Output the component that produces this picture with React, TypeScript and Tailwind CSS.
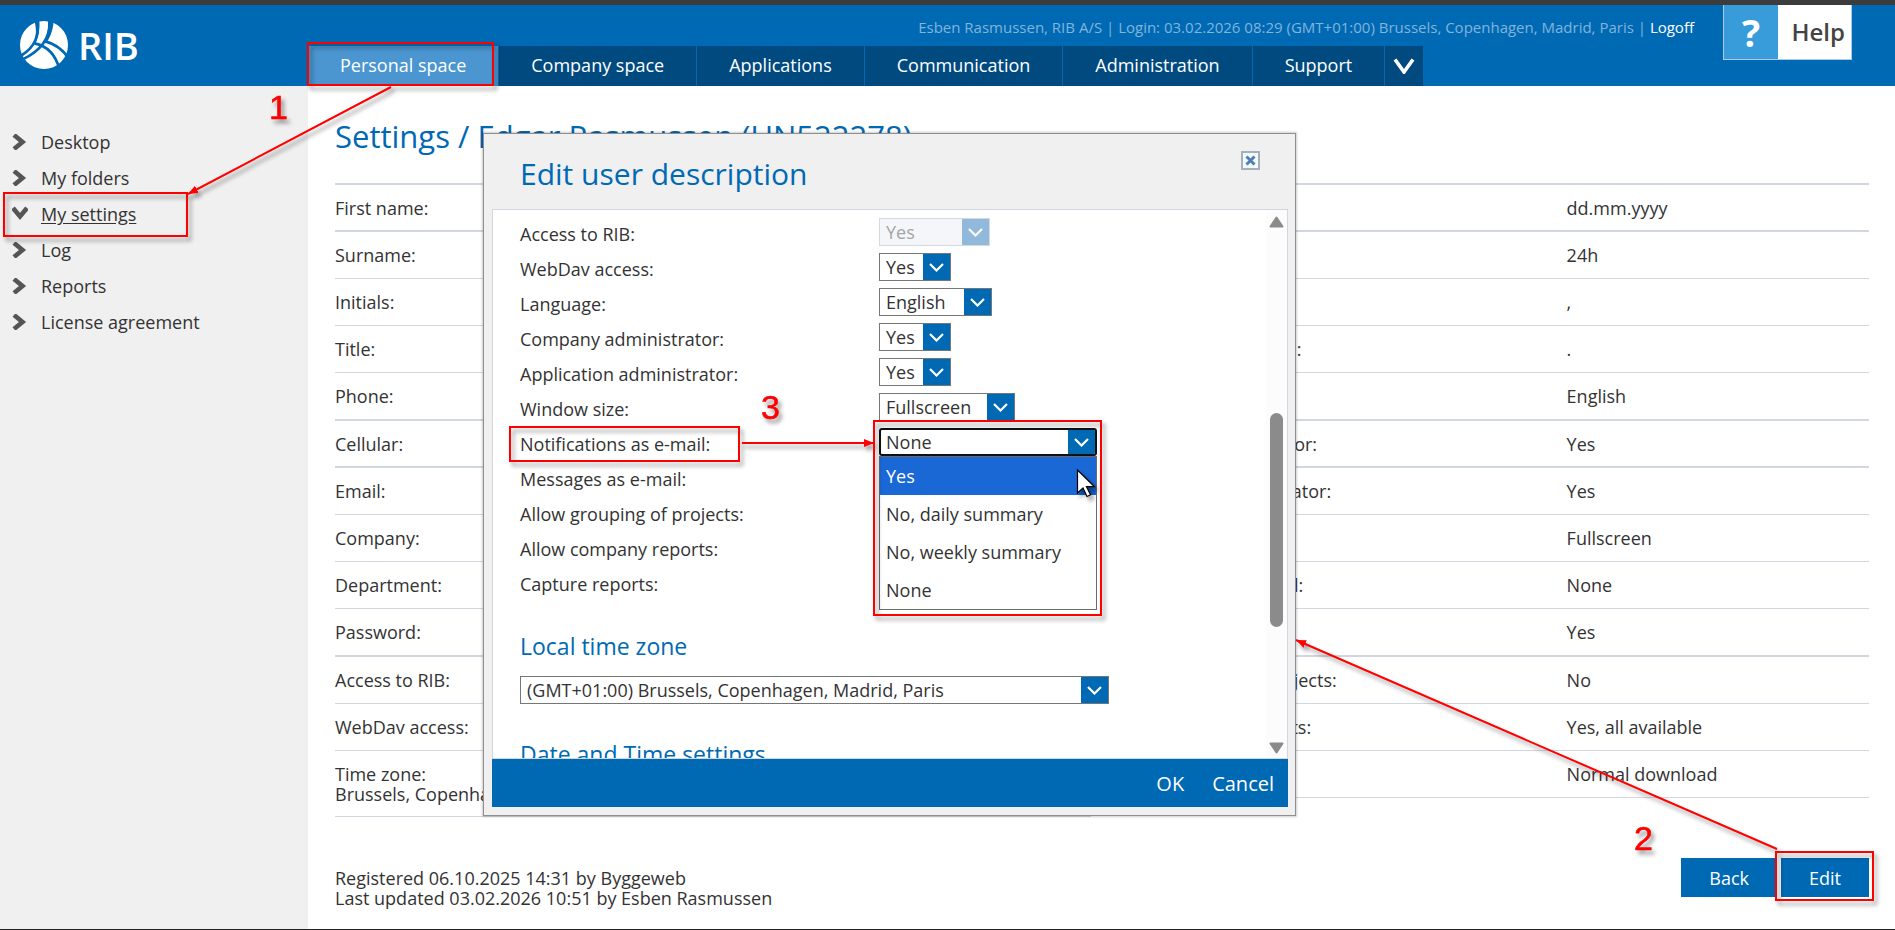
import React, { useState } from "react";

const tabs = ["Personal space", "Company space", "Applications", "Communication", "Administration", "Support"];

const menuItems = ["Desktop", "My folders", "My settings", "Log", "Reports", "License agreement"];

const personRows = [
  { label: "First name:", value: "", thick: true },
  { label: "Surname:", value: "" },
  { label: "Initials:", value: "" },
  { label: "Title:", value: "" },
  { label: "Phone:", value: "", thick: true, tall: true },
  { label: "Cellular:", value: "", thick: true },
  { label: "Email:", value: "" },
  { label: "Company:", value: "" },
  { label: "Department:", value: "" },
  { label: "Password:", value: "", thick: true, tall: true },
  { label: "Access to RIB:", value: "" },
  { label: "WebDav access:", value: "" },
];

const accessRows = [
  { label: "Date format:", value: "dd.mm.yyyy", thick: true },
  { label: "Time format:", value: "24h" },
  { label: "Decimal symbol:", value: "," },
  { label: "Digit grouping symbol:", value: "." },
  { label: "Language:", value: "English", thick: true, tall: true },
  { label: "Company administrator:", value: "Yes", thick: true },
  { label: "Application administrator:", value: "Yes" },
  { label: "Window size:", value: "Fullscreen" },
  { label: "Notifications as e-mail:", value: "None" },
  { label: "Messages as e-mail:", value: "Yes", thick: true, tall: true },
  { label: "Allow grouping of projects:", value: "No" },
  { label: "Allow company reports:", value: "Yes, all available" },
  { label: "Capture reports:", value: "Normal download" },
];

const notifyOptions = ["Yes", "No, daily summary", "No, weekly summary", "None"];

const formRows = [
  { id: "access", label: "Access to RIB:", options: ["Yes", "No"], width: "w-[111px]", disabled: true },
  { id: "webdav", label: "WebDav access:", options: ["Yes", "No"], width: "w-[72px]" },
  { id: "language", label: "Language:", options: ["English", "Dansk"], width: "w-[113px]" },
  { id: "company-admin", label: "Company administrator:", options: ["Yes", "No"], width: "w-[72px]" },
  { id: "app-admin", label: "Application administrator:", options: ["Yes", "No"], width: "w-[72px]" },
  { id: "window", label: "Window size:", options: ["Fullscreen"], width: "w-[136px]" },
  { id: "notify", label: "Notifications as e-mail:", options: ["None"], width: "w-[218px]", open: true },
  { id: "messages", label: "Messages as e-mail:", options: ["Yes", "No"], width: "w-[72px]" },
  { id: "grouping", label: "Allow grouping of projects:", options: ["No", "Yes"], width: "w-[72px]" },
  { id: "company-reports", label: "Allow company reports:", options: ["Yes", "No"], width: "w-[72px]" },
  { id: "capture", label: "Capture reports:", options: ["Yes", "No"], width: "w-[72px]" },
];

type Row = { label: string; value: string; thick?: boolean; tall?: boolean };

export default function App() {
  const [activeTab, setActiveTab] = useState("Personal space");
  const [dialogOpen, setDialogOpen] = useState(true);

  return (
    <div className="relative flex min-h-screen flex-col overflow-hidden border-b border-[#222222] bg-white font-['Open_Sans','Noto_Sans',sans-serif] text-lg leading-5 text-[#333333]">
      <div className="h-[5px] bg-[#3c3c3c]" />
      <header className="flex h-[81px] bg-[#0069b4]">
        <div className="flex w-[308px] items-center gap-[10px] pb-[2px] pl-5">
          <Logo />
          <span className="text-[38px] leading-10 font-semibold text-white">RIB</span>
        </div>
        <div className="mr-[29px] flex flex-1 flex-col justify-between">
          <p className="pt-3 text-right text-[15px] leading-5 text-[#80b4da]">
            Esben Rasmussen, RIB A/S | Login: 03.02.2026 08:29 (GMT+01:00) Brussels, Copenhagen, Madrid, Paris |{" "}
            <a href="#logoff" className="text-white">Logoff</a>
          </p>
          <nav className="flex h-10">
            {tabs.map((tab) => (
              <button
                key={tab}
                onClick={() => setActiveTab(tab)}
                className={
                  "border-r border-[#0069b4] px-8 pb-[2px] text-white " +
                  (tab === activeTab ? "bg-[#4b96d1]" : "bg-[#004a80]")
                }
              >
                {tab}
              </button>
            ))}
            <button className="flex w-[38px] items-center justify-center bg-[#004a80]" aria-label="More">
              <svg width="22" height="16" viewBox="0 0 22 16">
                <path d="M2 1.5 11 14 20 1.5" fill="none" stroke="#fff" strokeWidth="3.6" />
              </svg>
            </button>
          </nav>
        </div>
        <a
          href="#help"
          className="mr-[43px] flex h-[55px] w-[129px] border border-t-0 border-[#a9cdea] bg-white text-2xl font-semibold text-[#444444]"
        >
          <span className="flex w-[54px] items-center justify-center bg-[#389bda] text-[38px] font-bold text-white">?</span>
          <span className="flex flex-1 items-center justify-end pr-[6px]">Help</span>
        </a>
      </header>

      <div className="flex flex-1">
        <aside className="w-[308px] bg-[#f0f0f0] pt-[38px]">
          <ul>
            {menuItems.map((item) => (
              <li key={item}>
                <a href="#menu" className="flex h-9 items-center">
                  <span className="flex w-[41px] pl-3">
                    <MenuArrow down={item === "My settings"} />
                  </span>
                  <span className={item === "My settings" ? "underline underline-offset-2" : ""}>{item}</span>
                </a>
              </li>
            ))}
          </ul>
        </aside>

        <main className="flex flex-1 flex-col pt-7 pr-[26px] pl-[27px]">
          <h1 className="text-[31px] leading-[44px] text-[#0069b4]">Settings / Edgar Rasmussen (UN522278)</h1>
          <div className="mt-[25px] grid grid-cols-2 items-start gap-x-[22px]">
            <DetailTable rows={personRows}>
              <tr className="h-[66px]">
                <td colSpan={2} className="border-b border-[#d2d7df]">
                  Time zone:
                  <br />
                  Brussels, Copenhagen, Madrid, Paris
                </td>
              </tr>
            </DetailTable>
            <DetailTable rows={accessRows} />
          </div>
          <div className="mt-[41px] flex items-start justify-between pb-5">
            <p className="pt-[10px]">
              Registered 06.10.2025 14:31 by Byggeweb
              <br />
              Last updated 03.02.2026 10:51 by Esben Rasmussen
            </p>
            <div className="flex gap-1">
              <button className="h-[39px] bg-[#0069b4] px-7 text-white">Back</button>
              <button className="h-[39px] bg-[#0069b4] px-7 text-white" onClick={() => setDialogOpen(true)}>
                Edit
              </button>
            </div>
          </div>
        </main>
      </div>

      {dialogOpen && <EditDialog onClose={() => setDialogOpen(false)} />}
      <Annotations />
    </div>
  );
}

function DetailTable({ rows, children }: { rows: Row[]; children?: React.ReactNode }) {
  return (
    <table className="w-full table-fixed border-separate border-spacing-0 border-t-2 border-[#d2d7df]">
      <tbody>
        {rows.map((row) => {
          const line = row.thick ? "border-b-2 border-[#d2d7df]" : "border-b border-[#d2d7df]";
          return (
            <tr key={row.label} className={row.tall ? "h-12" : "h-[47px]"}>
              <th scope="row" className={"w-3/5 text-left font-normal " + line}>{row.label}</th>
              <td className={line}>{row.value}</td>
            </tr>
          );
        })}
        {children}
      </tbody>
    </table>
  );
}

function EditDialog({ onClose }: { onClose: () => void }) {
  return (
    <div
      role="dialog"
      aria-label="Edit user description"
      className="absolute top-[133px] left-[483px] w-[813px] border border-[#8f8f8f] bg-[#f0f0f0] pr-[7px] pb-2 pl-2 shadow-[0_0_2px_1px_rgba(0,0,0,0.2)]"
    >
      <div className="flex h-[75px] items-start justify-between pr-7 pl-7">
        <h2 className="pt-5 text-[30px] leading-10 text-[#0069b4]">Edit user description</h2>
        <button
          onClick={onClose}
          aria-label="Close"
          className="mt-[17px] flex h-[19px] w-[19px] items-center justify-center border-2 border-[#a3b1b8] bg-[#f4fafd]"
        >
          <svg width="11" height="11" viewBox="0 0 11 11">
            <path d="M1.5 1.5 9.5 9.5M9.5 1.5 1.5 9.5" stroke="#4f7fb5" strokeWidth="3" />
          </svg>
        </button>
      </div>
      <div className="flex h-[550px] overflow-hidden border border-[#d2d7df] bg-white">
        <div className="flex-1 pt-2 pl-[27px]">
          <div className="flex flex-col gap-[7px]">
            {formRows.map((row) => (
              <div key={row.id} className="flex h-7">
                <label htmlFor={row.id} className="w-[359px] pt-[6px]">{row.label}</label>
                <div className="relative">
                  <Select id={row.id} options={row.options} width={row.width} disabled={row.disabled} focused={row.open} />
                  {row.open && <OptionList />}
                </div>
              </div>
            ))}
          </div>
          <h3 className="mt-[34px] mb-[14px] text-[23px] leading-8 text-[#0069b4]">Local time zone</h3>
          <Select
            id="time-zone"
            label="Local time zone"
            options={["(GMT+01:00) Brussels, Copenhagen, Madrid, Paris"]}
            width="w-[589px]"
          />
          <h3 className="mt-[34px] text-[23px] leading-8 text-[#0069b4]">Date and Time settings</h3>
        </div>
        <div className="flex w-[21px] flex-col items-center bg-[#fcfcfc] pt-[6px] pb-1">
          <Triangle />
          <div className="mt-[185px] h-[214px] w-[13px] rounded-full bg-[#8b8b8b]" />
          <div className="mt-auto rotate-180">
            <Triangle />
          </div>
        </div>
      </div>
      <div className="flex h-12 items-center justify-end gap-7 bg-[#0069b4] pt-[2px] pr-[14px] text-xl text-white">
        <button onClick={onClose}>OK</button>
        <button onClick={onClose}>Cancel</button>
      </div>
    </div>
  );
}

function Select({
  id,
  options,
  width,
  disabled,
  focused,
  label,
}: {
  id: string;
  options: string[];
  width: string;
  disabled?: boolean;
  focused?: boolean;
  label?: string;
}) {
  let box = "border border-[#767676] bg-white pl-[6px]";
  if (disabled) box = "border border-[#d5d8dc] bg-[#f5f6f9] pl-[6px] text-[#a5a5a5]";
  if (focused) box = "rounded-[3px] border-2 border-[#101010] bg-white pl-[5px]";
  return (
    <div className={"relative h-7 overflow-hidden " + width + " " + box}>
      <select
        id={id}
        aria-label={label}
        disabled={disabled}
        className="h-full w-full appearance-none leading-6 outline-none"
      >
        {options.map((o) => (
          <option key={o}>{o}</option>
        ))}
      </select>
      <span
        className={
          "pointer-events-none absolute inset-y-0 right-0 flex w-[27px] items-center justify-center " +
          (disabled ? "bg-[#90b9db]" : "bg-[#0069b4]")
        }
      >
        <svg width="15" height="9" viewBox="0 0 15 9">
          <path d="M1 1 7.5 7.5 14 1" fill="none" stroke="#fff" strokeWidth="2.2" />
        </svg>
      </span>
    </div>
  );
}

function OptionList() {
  return (
    <ul
      role="listbox"
      aria-label="Notifications as e-mail"
      className="absolute top-7 left-0 z-10 w-[218px] border border-[#6b6b6b] bg-white"
    >
      {notifyOptions.map((option, i) => (
        <li
          key={option}
          role="option"
          aria-selected={i === 0}
          className={"flex h-[38px] items-center pl-[6px] " + (i === 0 ? "bg-[#1a67d6] text-white" : "")}
        >
          {option}
        </li>
      ))}
    </ul>
  );
}

function MenuArrow({ down }: { down: boolean }) {
  return (
    <svg width="16" height="16" viewBox="0 0 16 16" className={down ? "rotate-90" : ""}>
      <path d="M2 1 10.5 8 2 15" fill="none" stroke="#555" strokeWidth="4.6" />
    </svg>
  );
}

function Triangle() {
  return (
    <svg width="15" height="12" viewBox="0 0 15 12">
      <path d="M7.5 1.5 13.5 10.5h-12z" fill="#8b8b8b" stroke="#8b8b8b" strokeWidth="2" strokeLinejoin="round" />
    </svg>
  );
}

function Logo() {
  return (
    <svg width="48" height="48" viewBox="60 63 144 144">
      <circle cx="132" cy="135" r="72" fill="#fff" />
      <g fill="none" stroke="#0069b4" strokeWidth="8">
        <path d="M112 58C118 105 108 140 62 168" />
        <path d="M150 58C152 108 128 150 68 178" />
        <path d="M104 130C142 138 166 162 178 206" />
        <path d="M136 124C168 132 190 150 208 178" />
      </g>
      <g fill="#0069b4">
        <path d="M102 58h16C120 95 114 115 106 130L100 132C110 110 110 85 102 58z" />
        <path d="M143 58h18C160 92 150 112 138 130L131 128C143 106 146 84 143 58z" />
      </g>
    </svg>
  );
}

// Step markers drawn on top of the page
function Annotations() {
  return (
    <svg
      className="pointer-events-none absolute inset-0 z-20 h-full w-full [filter:drop-shadow(3px_4px_2px_rgba(0,0,0,0.4))]"
      fill="none"
      stroke="#f00"
      strokeWidth="2"
    >
      <defs>
        <marker id="tip" viewBox="0 0 10 8" refX="10" refY="4" markerWidth="10" markerHeight="8" markerUnits="userSpaceOnUse" orient="auto">
          <path d="M0 0 10 4 0 8z" fill="#f00" stroke="none" />
        </marker>
      </defs>
      <rect x="308" y="43" width="185" height="42" />
      <rect x="4" y="193" width="183" height="43" />
      <rect x="510" y="427" width="229" height="34" />
      <rect x="874" y="421" width="227" height="194" />
      <rect x="1776" y="852" width="97" height="48" />
      <path d="M391 87 188 194" markerEnd="url(#tip)" />
      <path d="M1777 849 1296 640" markerEnd="url(#tip)" />
      <path d="M742 443H874" markerEnd="url(#tip)" />
      <g fill="#f00" strokeWidth="0.6" fontSize="34" className="font-['Liberation_Sans',Arial,sans-serif]">
        <text x="269" y="119">1</text>
        <text x="1634" y="850">2</text>
        <text x="761" y="419">3</text>
      </g>
      <path
        d="M1077.5 470v23l5.5-5 4 8.5 3.5-1.8-4-8h8z"
        fill="#fff"
        stroke="#000"
        strokeWidth="1.2"
      />
    </svg>
  );
}
